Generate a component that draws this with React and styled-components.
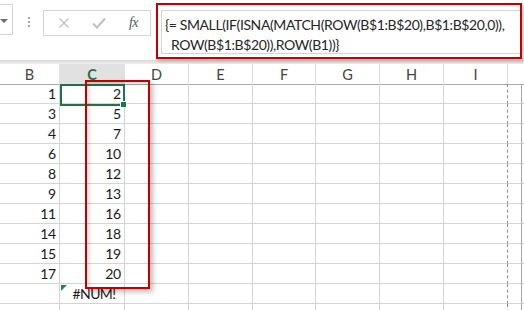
import React from 'react';
import styled, { createGlobalStyle } from 'styled-components';

const GlobalStyle = createGlobalStyle`
  html, body {
    margin: 0;
    padding: 0;
    background: #fff;
    overflow: hidden;
  }
  body {
    font-family: Lato, "Open Sans", sans-serif;
  }
`;

const COLS = [
  { name: 'B', width: 60 },
  { name: 'C', width: 65 },
  { name: 'D', width: 64 },
  { name: 'E', width: 64 },
  { name: 'F', width: 63 },
  { name: 'G', width: 64 },
  { name: 'H', width: 64 },
  { name: 'I', width: 64 },
  { name: '', width: 14 },
];
const TEMPLATE = COLS.map(c => `${c.width}px`).join(' ') + ' 1fr';

const ROWS = [
  ['1', '2'],
  ['3', '5'],
  ['4', '7'],
  ['6', '10'],
  ['8', '12'],
  ['9', '13'],
  ['11', '16'],
  ['14', '18'],
  ['15', '19'],
  ['17', '20'],
  ['', '#NUM!'],
  ['', ''],
];

const Page = styled.div`
  position: relative;
  width: 524px;
  height: 310px;
  overflow: hidden;
  background: #fff;
`;

const Toolbar = styled.div`
  display: flex;
  align-items: flex-start;
  height: 60px;
  background: #fff;
`;

const NameBox = styled.div`
  width: 13px;
  height: 31px;
  margin-top: 4px;
  border: 1px solid #d4d4d4;
  border-left: none;
  box-sizing: border-box;
  display: flex;
  align-items: center;
`;

const Caret = styled.div`
  width: 0;
  height: 0;
  border-left: 4px solid transparent;
  border-right: 4px solid transparent;
  border-top: 4px solid #6d6d6d;
  margin-top: 2px;
`;

const Grip = styled.div`
  width: 2px;
  height: 11px;
  margin: 17px 13px 0 15px;
  background: repeating-linear-gradient(to bottom, #a6a6a6 0 2px, transparent 2px 4px);
`;

const ButtonBox = styled.div`
  width: 108px;
  height: 26px;
  margin-top: 10px;
  border: 1px solid #d4d4d4;
  box-sizing: border-box;
  display: flex;
  align-items: center;
  justify-content: space-between;
  padding: 0 12px 0 14px;
`;

const Fx = styled.span`
  font-family: "Liberation Serif", serif;
  font-style: italic;
  font-size: 14px;
  color: #595959;
  letter-spacing: -0.5px;
`;

const FormulaFrame = styled.div`
  margin: 3px 0 0 5px;
  width: 366px;
  height: 56px;
  border: 2px solid #c00000;
  box-sizing: border-box;
  box-shadow: 2px 2px 4px rgba(0, 0, 0, 0.25);
  padding: 5px 0 0 3px;
`;

const FormulaInput = styled.div`
  height: 44px;
  border-top: 1px solid #d4d4d4;
  border-bottom: 1px solid #d4d4d4;
  border-left: 1px solid #d4d4d4;
  box-sizing: border-box;
  padding: 4px 0 0 3px;
  font-size: 14px;
  letter-spacing: -0.4px;
  line-height: 20px;
  color: #262626;
  white-space: nowrap;
`;

const Indent = styled.span`
  padding-left: 6px;
`;

const Band = styled.div`
  height: 4px;
  background: linear-gradient(to bottom, #d9d9d9, #efefef);
`;

const Sheet = styled.div`
  display: grid;
  grid-template-columns: ${TEMPLATE};
  grid-auto-rows: 20px;
`;

const HeaderCell = styled.div`
  height: 21px;
  display: flex;
  align-items: center;
  justify-content: center;
  font-size: 14.5px;
  color: ${p => (p.$active ? '#217346' : '#444')};
  font-weight: ${p => (p.$active ? 700 : 400)};
  background: ${p => (p.$active ? '#e1e1e1' : '#fff')};
  border-right: 1px solid ${p => (p.$last ? 'transparent' : '#e0e0e0')};
  border-bottom: 1px solid ${p => (p.$active ? '#217346' : '#ababab')};
  box-sizing: border-box;
`;

const Cell = styled.div`
  position: relative;
  display: flex;
  align-items: center;
  justify-content: ${p => p.$align || 'flex-end'};
  padding-right: ${p => (p.$align === 'center' ? '0' : '3px')};
  font-size: 14px;
  letter-spacing: -0.2px;
  color: #1a1a1a;
  border-right: 1px solid ${p => (p.$edge ? '#a6a6a6' : '#d4d4d4')};
  border-bottom: 1px solid #d4d4d4;
  box-sizing: border-box;
  ${p => p.$pageBreak && `
    border-right: 1px dashed #8c8c8c;
  `}
`;

const ErrorText = styled.span`
  letter-spacing: -0.6px;
  margin-left: 4px;
`;

const ErrorFlag = styled.span`
  position: absolute;
  left: 1px;
  top: 1px;
  width: 0;
  height: 0;
  border-top: 6px solid #1e8c45;
  border-right: 6px solid transparent;
`;

const Selection = styled.div`
  position: absolute;
  left: 60px;
  top: 84px;
  width: 65px;
  height: 22px;
  border: 2px solid #217346;
  box-sizing: border-box;
  pointer-events: none;
`;

const Handle = styled.div`
  position: absolute;
  right: -4px;
  bottom: -4px;
  width: 5px;
  height: 5px;
  background: #217346;
  border: 1px solid #fff;
`;

const Highlight = styled.div`
  position: absolute;
  left: 85px;
  top: 80px;
  width: 65px;
  height: 209px;
  border: 2px solid #c00000;
  box-sizing: border-box;
  box-shadow: 3px 3px 5px rgba(0, 0, 0, 0.25), inset 2px 2px 4px rgba(0, 0, 0, 0.15);
  pointer-events: none;
`;

const CrossIcon = () => (
  <svg width="12" height="12" viewBox="0 0 12 12">
    <path d="M1.5 1.5 L10.5 10.5 M10.5 1.5 L1.5 10.5" stroke="#bfbfbf" strokeWidth="1.3" fill="none" />
  </svg>
);

const CheckIcon = () => (
  <svg width="14" height="12" viewBox="0 0 14 12">
    <path d="M1 6.5 L5 10.5 L13 1.5" stroke="#bfbfbf" strokeWidth="2" fill="none" />
  </svg>
);

export default function App() {
  return (
    <Page>
      <GlobalStyle />
      <Toolbar>
        <NameBox>
          <Caret />
        </NameBox>
        <Grip />
        <ButtonBox>
          <CrossIcon />
          <CheckIcon />
          <Fx>fx</Fx>
        </ButtonBox>
        <FormulaFrame>
          <FormulaInput>
            {'{= SMALL(IF(ISNA(MATCH(ROW(B$1:B$20),B$1:B$20,0)),'}
            <br />
            <Indent>{'ROW(B$1:B$20)),ROW(B1))}'}</Indent>
          </FormulaInput>
        </FormulaFrame>
      </Toolbar>
      <Band />
      <Sheet>
        {COLS.map((c, i) => (
          <HeaderCell key={`h${i}`} $active={c.name === 'C'} $last={i === COLS.length - 1}>
            {c.name}
          </HeaderCell>
        ))}
        <HeaderCell $last />
        {ROWS.map((row, r) =>
          COLS.map((c, i) => {
            const value = i === 0 ? row[0] : i === 1 ? row[1] : '';
            const isError = value === '#NUM!';
            return (
              <Cell
                key={`${r}-${i}`}
                $align={isError ? 'center' : 'flex-end'}
                $pageBreak={i === 7}
                $edge={i === 8}
              >
                {isError && <ErrorFlag />}
                {isError ? <ErrorText>{value}</ErrorText> : value}
              </Cell>
            );
          }).concat(<Cell key={`${r}-x`} />)
        )}
      </Sheet>
      <Selection>
        <Handle />
      </Selection>
      <Highlight />
    </Page>
  );
}
